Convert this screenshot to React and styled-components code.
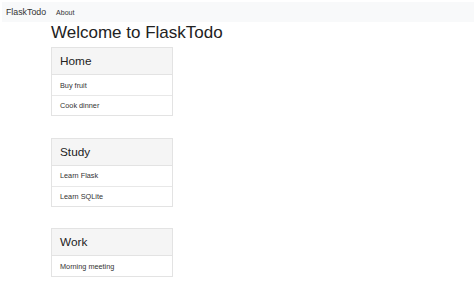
import React from "react";
import styled, { createGlobalStyle } from "styled-components";

const lists = [
  { name: "Home", items: ["Buy fruit", "Cook dinner"] },
  { name: "Study", items: ["Learn Flask", "Learn SQLite"] },
  { name: "Work", items: ["Morning meeting"] },
];

const GlobalStyle = createGlobalStyle`
  html, body {
    margin: 0;
    padding: 0;
    background: #ffffff;
    font-family: "Liberation Sans", Arial, sans-serif;
    color: #333333;
  }
  * {
    box-sizing: border-box;
  }
`;

const Page = styled.div`
  padding: 2px 0 0 2px;
`;

const Navbar = styled.nav`
  display: flex;
  align-items: center;
  height: 20px;
  background: #f8f9fa;
  padding-left: 4px;
  gap: 10px;
`;

const Brand = styled.span`
  font-size: 8.8px;
  color: #333333;
`;

const NavLink = styled.span`
  font-size: 7px;
  color: #333333;
`;

const Container = styled.main`
  width: 122px;
  margin-left: 49px;
`;

const Title = styled.h1`
  margin: 1px 0 4px;
  font-size: 17px;
  font-weight: 400;
  line-height: 20px;
  color: #222222;
  white-space: nowrap;
`;

const Panel = styled.section`
  border: 1px solid #e3e3e3;
  margin-bottom: 21.5px;
`;

const PanelHeading = styled.div`
  height: 27px;
  display: flex;
  align-items: center;
  padding-left: 8px;
  background: #f5f5f5;
  border-bottom: 1px solid #e3e3e3;
  font-size: 11.8px;
  color: #222222;
`;

const Item = styled.div`
  height: 20px;
  display: flex;
  align-items: center;
  padding-left: 8px;
  font-size: 7.3px;
  color: #333333;
  & + & {
    border-top: 1px solid #e8e8e8;
  }
`;

export default function App() {
  return (
    <Page>
      <GlobalStyle />
      <Navbar>
        <Brand>FlaskTodo</Brand>
        <NavLink>About</NavLink>
      </Navbar>
      <Container>
        <Title>Welcome to FlaskTodo</Title>
        {lists.map((list) => (
          <Panel key={list.name}>
            <PanelHeading>{list.name}</PanelHeading>
            {list.items.map((item) => (
              <Item key={item}>{item}</Item>
            ))}
          </Panel>
        ))}
      </Container>
    </Page>
  );
}
